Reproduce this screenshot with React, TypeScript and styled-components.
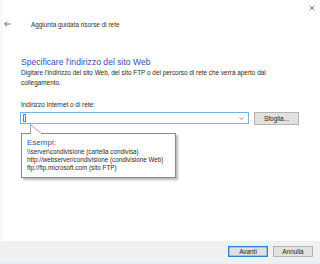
import styled, {createGlobalStyle} from 'styled-components';

const GlobalStyle = createGlobalStyle`
  html, body {
    margin: 0;
    padding: 0;
    background: #ffffff;
  }

  body {
    font-family: "Liberation Sans", Arial, sans-serif;
    color: #2a2a2a;
  }
`;

const examples = [
    '\\\\server\\condivisione (cartella condivisa)',
    'http://webserver/condivisione (condivisione Web)',
    'ftp://ftp.microsoft.com (sito FTP)',
];

export default function App() {
    return (
        <Window>
            <GlobalStyle/>

            <TopStrip>
                <CloseButton aria-label="Chiudi">
                    <svg width="6" height="6" viewBox="0 0 6 6">
                        <path d="M0.5 0.5 L5.5 5.5 M5.5 0.5 L0.5 5.5" stroke="#6b6b6b" strokeWidth="0.8"/>
                    </svg>
                </CloseButton>
            </TopStrip>

            <TitleRow>
                <BackArrow>
                    <svg width="7" height="6" viewBox="0 0 7 6">
                        <path d="M6.5 3 H0.8 M3 0.6 L0.6 3 L3 5.4" stroke="#444" strokeWidth="0.8" fill="none"/>
                    </svg>
                </BackArrow>
                <WizardTitle>Aggiunta guidata risorse di rete</WizardTitle>
            </TitleRow>

            <Content>
                <Heading>Specificare l'indirizzo del sito Web</Heading>
                <Description>
                    Digitare l'indirizzo del sito Web, del sito FTP o del percorso di rete che verrà aperto dal
                    <br/>
                    collegamento.
                </Description>

                <FieldLabel>Indirizzo Internet o di rete:</FieldLabel>

                <FieldRow>
                    <ComboBox>
                        <Caret/>
                        <Chevron>
                            <svg width="5" height="3" viewBox="0 0 5 3">
                                <path d="M0.4 0.4 L2.5 2.5 L4.6 0.4" stroke="#7a7a7a" strokeWidth="0.7" fill="none"/>
                            </svg>
                        </Chevron>

                        <Tooltip>
                            <TooltipTail viewBox="0 0 13 10" width="13" height="10">
                                <path d="M0.5 10 L0.5 0.5 L12 10" fill="#fff" stroke="#8a8a8a" strokeWidth="0.8"/>
                            </TooltipTail>
                            <TooltipTitle>Esempi:</TooltipTitle>
                            {examples.map(line => (
                                <TooltipLine key={line}>{line}</TooltipLine>
                            ))}
                        </Tooltip>
                    </ComboBox>

                    <Button>Sfoglia...</Button>
                </FieldRow>
            </Content>

            <Footer>
                <Button $primary>Avanti</Button>
                <Button>Annulla</Button>
            </Footer>
        </Window>
    );
}

const Window = styled.div`
  position: relative;
  width: 320px;
  height: 264px;
  display: flex;
  flex-direction: column;
  background: #fff;
  overflow: hidden;
  box-shadow: inset 5px 0 4px -3px rgba(0, 0, 0, 0.04);
`;

const TopStrip = styled.div`
  height: 16px;
  display: flex;
  justify-content: flex-end;
  align-items: center;
  padding-right: 5px;
`;

const CloseButton = styled.div`
  width: 6px;
  height: 6px;
  display: flex;
`;

const TitleRow = styled.div`
  height: 16px;
  display: flex;
  align-items: center;
  padding-left: 4px;
  gap: 20px;
`;

const BackArrow = styled.div`
  display: flex;
  width: 7px;
`;

const WizardTitle = styled.span`
  font-size: 6.4px;
  color: #333;
`;

const Content = styled.div`
  flex: 1;
  display: flex;
  flex-direction: column;
  padding: 25px 0 0 20px;
`;

const Heading = styled.div`
  font-size: 8.6px;
  line-height: 10px;
  color: #3553a6;
  padding-left: 1px;
  margin-bottom: 1px;
`;

const Description = styled.div`
  font-size: 6.4px;
  line-height: 9.5px;
  padding-left: 1px;
`;

const FieldLabel = styled.div`
  margin-top: 13px;
  font-size: 6.4px;
  line-height: 9px;
  padding-left: 1px;
`;

const FieldRow = styled.div`
  margin-top: 3px;
  display: flex;
  align-items: flex-start;
  gap: 5px;
`;

const ComboBox = styled.div`
  position: relative;
  width: 229px;
  height: 12px;
  box-sizing: border-box;
  border: 1px solid #7fb0dd;
  display: flex;
  align-items: center;
  padding: 0 2px 0 2px;
`;

const Caret = styled.span`
  width: 3px;
  height: 8px;
  background: #3b8ee0;
  position: relative;

  &::after {
    content: '';
    position: absolute;
    left: 1px;
    top: 1px;
    width: 1px;
    height: 6px;
    background: #fff;
  }
`;

const Chevron = styled.span`
  margin-left: auto;
  margin-right: 2px;
  display: flex;
`;

const Tooltip = styled.div`
  position: absolute;
  top: 20px;
  left: 0;
  width: 155px;
  box-sizing: border-box;
  border: 1px solid #8a8a8a;
  background: #fff;
  padding: 4px 5px 5px 5px;
  box-shadow: 2px 2px 2px rgba(0, 0, 0, 0.28);
  z-index: 5;
`;

const TooltipTail = styled.svg`
  position: absolute;
  left: 8px;
  top: -10px;
`;

const TooltipTitle = styled.div`
  font-size: 8px;
  line-height: 10px;
  color: #3553a6;
`;

const TooltipLine = styled.div`
  font-size: 6.3px;
  line-height: 8px;
`;

const Button = styled.div<{ $primary?: boolean }>`
  width: 40px;
  height: 11px;
  box-sizing: border-box;
  display: flex;
  align-items: center;
  justify-content: center;
  font-size: 6.4px;
  color: #222;
  background: #e1e1e1;
  border: 1px solid ${p => (p.$primary ? '#2f7fd0' : '#b4b4b4')};
  box-shadow: ${p => (p.$primary ? 'inset 0 0 0 0.5px #6ea6e0' : 'none')};

  ${FieldRow} & {
    width: 45px;
    height: 13px;
  }
`;

const Footer = styled.div`
  height: 23px;
  box-sizing: border-box;
  display: flex;
  justify-content: flex-end;
  align-items: center;
  gap: 5px;
  padding-right: 7px;
  background: #f0f0f0;
  border-bottom: 2px solid #e6eff8;
`;
